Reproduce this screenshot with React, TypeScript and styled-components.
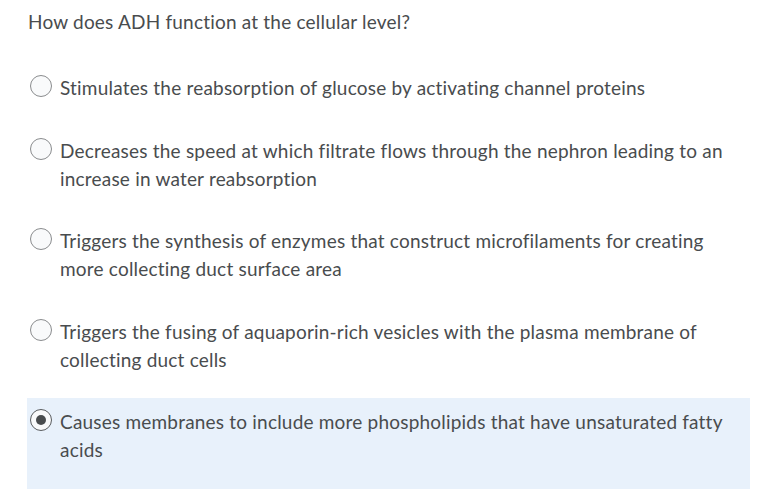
import React from "react";
import styled, { createGlobalStyle } from "styled-components";

const Global = createGlobalStyle`
  html, body { margin: 0; padding: 0; background: #ffffff; }
  body {
    font-family: Lato, "Open Sans", sans-serif;
    color: #494c4e;
    font-variant-ligatures: none;
  }
`;

const Page = styled.div`
  width: 768px;
  height: 500px;
  box-sizing: border-box;
  padding: 8px 18px 0 27px;
`;

const Question = styled.div`
  font-size: 19px;
  letter-spacing: 0.2px;
  line-height: 28px;
  padding-left: 1px;
  margin-bottom: 28px;
`;

const List = styled.div`
  display: flex;
  flex-direction: column;
`;

const Option = styled.label<{ $selected?: boolean }>`
  display: flex;
  align-items: flex-start;
  gap: 8px;
  padding: 10px 12px 24.5px 3px;
  background: ${(p) => (p.$selected ? "#e8f1fb" : "transparent")};
  cursor: pointer;
`;

const Radio = styled.span<{ $checked?: boolean }>`
  flex: 0 0 auto;
  box-sizing: border-box;
  width: 22px;
  height: 22px;
  margin-top: 1px;
  border-radius: 50%;
  border: ${(p) => (p.$checked ? "1.5px solid #5a5d60" : "1px solid #8a8c8e")};
  background: #f9fafb;
  display: flex;
  align-items: center;
  justify-content: center;
  &::after {
    content: "";
    width: 10px;
    height: 10px;
    border-radius: 50%;
    background: ${(p) => (p.$checked ? "#494c4e" : "transparent")};
  }
`;

const Text = styled.span`
  font-size: 19px;
  letter-spacing: 0.2px;
  line-height: 28px;
`;

const options = [
  "Stimulates the reabsorption of glucose by activating channel proteins",
  "Decreases the speed at which filtrate flows through the nephron leading to an increase in water reabsorption",
  "Triggers the synthesis of enzymes that construct microfilaments for creating more collecting duct surface area",
  "Triggers the fusing of aquaporin-rich vesicles with the plasma membrane of collecting duct cells",
  "Causes membranes to include more phospholipids that have unsaturated fatty acids",
];

export default function App() {
  return (
    <Page>
      <Global />
      <Question>How does ADH function at the cellular level?</Question>
      <List>
        {options.map((o, i) => (
          <Option key={i} $selected={i === 4}>
            <Radio $checked={i === 4} />
            <Text>{o}</Text>
          </Option>
        ))}
      </List>
    </Page>
  );
}
